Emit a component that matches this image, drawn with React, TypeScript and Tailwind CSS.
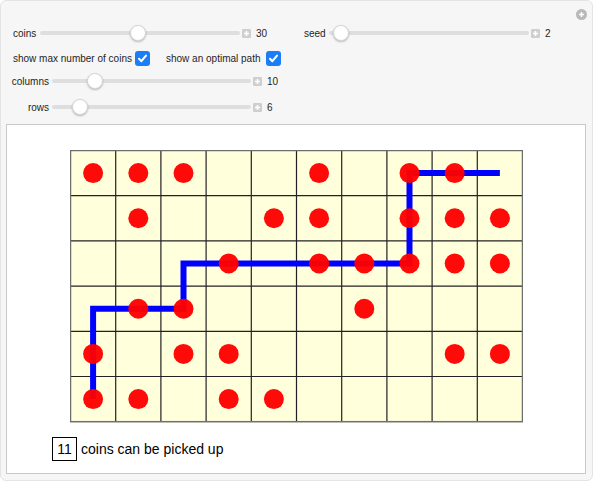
import React from "react";

const CELL = 45.2;
const COLS = 10;
const ROWS = 6;

// coins per row, by column index
const coins: number[][] = [
  [0, 1, 2, 5, 7, 8],
  [1, 4, 5, 7, 8, 9],
  [3, 5, 6, 7, 8, 9],
  [1, 2, 6],
  [0, 2, 3, 8, 9],
  [0, 1, 3, 4],
];

const path: [number, number][] = [
  [0, 5],
  [0, 3],
  [2, 3],
  [2, 2],
  [7, 2],
  [7, 0],
  [9, 0],
];

const cx = (c: number) => 0.5 + (c + 0.5) * CELL;
const cy = (r: number) => 0.5 + (r + 0.5) * CELL;

function PlusBox() {
  return (
    <svg width="9" height="9" viewBox="0 0 9 9" className="shrink-0">
      <rect width="9" height="9" rx="1" fill="#cfcfcf" />
      <path d="M4.5 2v5M2 4.5h5" stroke="#fff" strokeWidth="1.6" />
    </svg>
  );
}

function Slider({ width, pos }: { width: number; pos: number }) {
  return (
    <div className="relative h-[16px] shrink-0" style={{ width }}>
      <div className="absolute left-0 right-0 top-[6px] h-[4px] rounded-full bg-[#dedede]" />
      <div
        className="absolute top-0 h-[16px] w-[16px] rounded-full border border-[#d6d6d6] bg-white shadow-[0_1px_2px_rgba(0,0,0,0.25)]"
        style={{ left: pos - 8 }}
      />
    </div>
  );
}

function Checkbox() {
  return (
    <div className="flex h-[15px] w-[15px] shrink-0 items-center justify-center rounded-[3px] bg-[#1a7ef7]">
      <svg width="11" height="11" viewBox="0 0 11 11">
        <path d="M2 5.8 L4.4 8.2 L9 2.6" fill="none" stroke="#fff" strokeWidth="2" strokeLinecap="round" strokeLinejoin="round" />
      </svg>
    </div>
  );
}

function Board() {
  const w = COLS * CELL + 1;
  const h = ROWS * CELL + 1;
  return (
    <svg width={Math.ceil(w)} height={Math.ceil(h)} className="block">
      <rect x="0.5" y="0.5" width={COLS * CELL} height={ROWS * CELL} fill="#ffffdc" />
      {Array.from({ length: COLS - 1 }, (_, i) => (
        <line key={"v" + i} x1={0.5 + (i + 1) * CELL} y1="0.5" x2={0.5 + (i + 1) * CELL} y2={0.5 + ROWS * CELL} stroke="#222" strokeWidth="1.2" />
      ))}
      {Array.from({ length: ROWS - 1 }, (_, i) => (
        <line key={"h" + i} x1="0.5" y1={0.5 + (i + 1) * CELL} x2={0.5 + COLS * CELL} y2={0.5 + (i + 1) * CELL} stroke="#222" strokeWidth="1.2" />
      ))}
      <rect x="0.5" y="0.5" width={COLS * CELL} height={ROWS * CELL} fill="none" stroke="#6e6e6e" strokeWidth="1.5" />
      <polyline
        points={path.map(([c, r]) => `${cx(c)},${cy(r)}`).join(" ")}
        fill="none"
        stroke="#0000ff"
        strokeWidth="6"
        strokeLinejoin="miter"
      />
      {coins.map((row, r) =>
        row.map((c) => <circle key={`${r}-${c}`} cx={cx(c)} cy={cy(r)} r="10" fill="#ff0000" fillOpacity="0.96" />)
      )}
    </svg>
  );
}

export default function App() {
  return (
    <div className="h-[483px] w-[594px] bg-white text-[10px] text-[#1e1e1e]" style={{ fontFamily: '"Liberation Sans", Arial, sans-serif' }}>
      <div className="relative h-[481px] w-[593px] rounded-[6px] border border-[#e4e4e4] bg-[#f6f6f6]">
        {/* corner button */}
        <div className="absolute right-[5px] top-[8px] flex h-[11px] w-[11px] items-center justify-center rounded-full bg-[#b9b9b9]">
          <svg width="7" height="7" viewBox="0 0 7 7">
            <path d="M3.5 1v5M1 3.5h5" stroke="#fff" strokeWidth="1.5" />
          </svg>
        </div>

        {/* controls */}
        <div className="flex flex-col pt-[24px]">
          <div className="flex h-[16px] items-center">
            <div className="w-[39px] pl-[12px]">coins</div>
            <Slider width={200} pos={98} />
            <div className="ml-[2px]"><PlusBox /></div>
            <div className="ml-[5px] w-[48px]">30</div>
            <div className="w-[25px]">seed</div>
            <Slider width={200} pos={12} />
            <div className="ml-[2px]"><PlusBox /></div>
            <div className="ml-[5px]">2</div>
          </div>
          <div className="mt-[9px] flex h-[16px] items-center">
            <div className="w-[134px] pl-[12px]">show max number of coins</div>
            <Checkbox />
            <div className="w-[116px] pl-[16px]">show an optimal path</div>
            <Checkbox />
          </div>
          <div className="mt-[7px] flex h-[16px] items-center">
            <div className="w-[51px] pr-[3px] text-right">columns</div>
            <Slider width={199} pos={43} />
            <div className="ml-[2px]"><PlusBox /></div>
            <div className="ml-[5px]">10</div>
          </div>
          <div className="mt-[10px] flex h-[16px] items-center">
            <div className="w-[51px] pr-[3px] text-right">rows</div>
            <Slider width={199} pos={28} />
            <div className="ml-[2px]"><PlusBox /></div>
            <div className="ml-[5px]">6</div>
          </div>
        </div>

        {/* output panel */}
        <div className="ml-[5px] mt-[9px] h-[350px] w-[580px] border border-[#c8c8c8] bg-white">
          <div className="pl-[63px] pt-[25px]">
            <Board />
          </div>
          <div className="mt-[14px] flex items-center pl-[45px] text-[14px] text-black">
            <div className="flex h-[24px] w-[25px] items-center justify-center border border-black">11</div>
            <div className="ml-[4px]">coins can be picked up</div>
          </div>
        </div>
      </div>
    </div>
  );
}
